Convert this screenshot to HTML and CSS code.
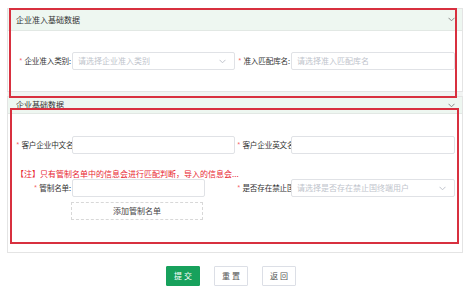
FILE: index.html
```html
<!DOCTYPE html>
<html lang="zh-CN">
<head>
<meta charset="utf-8">
<link rel="stylesheet" href="styles.css">
</head>
<body>
<div class="page">
  <section class="panel">
    <div class="panel-head">
      <span>企业准入基础数据</span>
      <svg class="arrow" width="7" height="5" viewBox="0 0 7 5"><polyline points="0.5,0.8 3.5,3.8 6.5,0.8" fill="none" stroke="#8a8a8a" stroke-width="1"/></svg>
    </div>
    <div class="panel-body body1">
      <div class="grid">
        <div class="item">
          <div class="label"><i>*</i>企业准入类别:</div>
          <div class="control select"><span class="ph">请选择企业准入类别</span>
            <svg width="7" height="5" viewBox="0 0 7 5"><polyline points="0.5,0.8 3.5,3.8 6.5,0.8" fill="none" stroke="#c0c4cc" stroke-width="1"/></svg>
          </div>
        </div>
        <div class="item right">
          <div class="label"><i>*</i>准入匹配库名:</div>
          <div class="control"><span class="ph">请选择准入匹配库名</span></div>
        </div>
      </div>
    </div>
  </section>

  <section class="panel panel2">
    <div class="panel-head head2">
      <span>企业基础数据</span>
      <svg class="arrow" width="7" height="5" viewBox="0 0 7 5"><polyline points="0.5,0.8 3.5,3.8 6.5,0.8" fill="none" stroke="#8a8a8a" stroke-width="1"/></svg>
    </div>
    <div class="panel-body body2">
      <div class="grid">
        <div class="item">
          <div class="label"><i>*</i>客户企业中文名:</div>
          <div class="control"></div>
        </div>
        <div class="item right">
          <div class="label"><i>*</i>客户企业英文名:</div>
          <div class="control"></div>
        </div>
      </div>
      <p class="note">【注】只有管制名单中的信息会进行匹配判断，导入的信息会...</p>
      <div class="grid row2">
        <div class="item">
          <div class="label"><i>*</i>管制名单:</div>
          <div class="control short"></div>
        </div>
        <div class="item right">
          <div class="label"><i>*</i>是否存在禁止国终端用户:</div>
          <div class="control select"><span class="ph">请选择是否存在禁止国终端用户</span>
            <svg width="7" height="5" viewBox="0 0 7 5"><polyline points="0.5,0.8 3.5,3.8 6.5,0.8" fill="none" stroke="#c0c4cc" stroke-width="1"/></svg>
          </div>
        </div>
      </div>
      <button class="add">添加管制名单</button>
    </div>
  </section>

  <div class="actions">
    <button class="btn primary">提交</button>
    <button class="btn">重置</button>
    <button class="btn">返回</button>
  </div>

  <div class="mark mark1"></div>
  <div class="mark mark2"></div>
</div>
</body>
</html>
```
FILE: styles.css
```css
* { box-sizing: border-box; }
html, body { margin: 0; padding: 0; background: #fff; }
body {
  font-family: "Noto Sans CJK SC", "Noto Sans", sans-serif;
  font-size: 8px;
  color: #333;
  line-height: 10px;
}
.page {
  position: relative;
  width: 456px;
  margin-left: 7px;
  padding-top: 8px;
}
.panel {
  border: 1px solid #e4e4e4;
  background: #fff;
}
.panel2 {
  margin-top: 4px;
  box-shadow: 0 -4px 0 #f2f4f3;
}
.panel-head {
  height: 22px;
  background: #eef7f1;
  border-bottom: 1px solid #e2e8e4;
  display: flex;
  align-items: center;
  justify-content: space-between;
  padding: 0 7px 0 8px;
  color: #333;
}
.head2 { height: 17px; }
.arrow { display: block; }
.body1 { padding: 21px 7px 21px 8px; }
.body2 { padding: 22px 7px 32px 8px; }
.grid {
  display: grid;
  grid-template-columns: 219px 218px;
  column-gap: 2px;
}
.item {
  display: flex;
  align-items: center;
  height: 18px;
}
.label {
  width: 56px;
  flex: none;
  text-align: right;
  white-space: nowrap;
  overflow: hidden;
  padding-right: 1px;
  color: #333;
  font-size: 7.6px;
  letter-spacing: -0.15px;
}
.right .label { width: 54px; }
.label i {
  font-style: normal;
  color: #f56c6c;
  margin-right: 2px;
}
.control {
  flex: 1;
  height: 18px;
  border: 1px solid #e0e2e6;
  border-radius: 2px;
  display: flex;
  align-items: center;
  justify-content: space-between;
  padding: 0 8px 0 5px;
}
.control.short { flex: none; width: 133px; }
.ph { color: #c0c4cc; white-space: nowrap; }
.note {
  margin: 15px 0 0;
  height: 10px;
  color: #e8262f;
}
.row2 { margin-top: 0; }
.add {
  display: block;
  margin: 5px 0 0 55px;
  width: 132px;
  height: 18px;
  border: 1px dashed #d8d8d8;
  background: #fff;
  font: inherit;
  color: #444;
  padding: 0;
}
.actions {
  display: flex;
  gap: 14px;
  margin: 13px 0 0 159px;
}
.btn {
  width: 34px;
  height: 20px;
  border: 1px solid #dcdfe6;
  background: #fff;
  color: #555;
  font: inherit;
  letter-spacing: 2px;
  padding: 0 0 0 2px;
  border-radius: 1px;
}
.btn.primary {
  background: #17a15c;
  border-color: #17a15c;
  color: #fff;
}
.mark {
  position: absolute;
  border: 2px solid #d8303f;
  pointer-events: none;
}
.mark1 { left: 2px; top: 8px; width: 448px; height: 90px; }
.mark2 { left: 3px; top: 108px; width: 449px; height: 136px; }
```
